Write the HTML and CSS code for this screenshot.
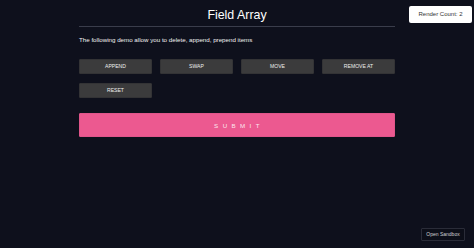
FILE: index.html
```html
<!DOCTYPE html>
<html lang="en">
<head>
<meta charset="utf-8">
<title>Field Array</title>
<link rel="stylesheet" href="styles.css">
</head>
<body>
  <div class="render-count">Render Count: 2</div>
  <main class="container">
    <h1 class="title">Field Array</h1>
    <p class="desc">The following demo allow you to delete, append, prepend items</p>
    <div class="actions">
      <button class="btn" type="button">APPEND</button>
      <button class="btn" type="button">SWAP</button>
      <button class="btn" type="button">MOVE</button>
      <button class="btn" type="button">REMOVE AT</button>
      <button class="btn" type="button">RESET</button>
    </div>
    <button class="submit" type="submit">SUBMIT</button>
  </main>
  <a class="sandbox" href="#">Open Sandbox</a>
</body>
</html>
```

FILE: styles.css
```css
* { box-sizing: border-box; }

html, body {
  margin: 0;
  padding: 0;
  height: 100%;
}

body {
  background: #0e101c;
  color: #fff;
  font-family: "Liberation Sans", Arial, sans-serif;
  position: relative;
  overflow: hidden;
}

.container {
  width: 316px;
  margin: 0 auto;
  display: flex;
  flex-direction: column;
}

.title {
  margin: 0;
  padding: 8px 0 3px;
  font-size: 12.4px;
  line-height: 15px;
  font-weight: 400;
  text-align: center;
  color: #fff;
  border-bottom: 1px solid #3a3d4b;
}

.desc {
  margin: 9px 0 0;
  font-size: 6.2px;
  line-height: 8px;
  color: #f2f2f2;
}

.actions {
  margin-top: 15px;
  display: grid;
  grid-template-columns: repeat(4, 73px);
  column-gap: 8px;
  row-gap: 9px;
}

.btn {
  height: 15px;
  margin: 0;
  padding: 0;
  background: #3b3b3c;
  border: 1px solid #333335;
  border-radius: 1px;
  color: #eeeeee;
  font-family: "Liberation Sans", Arial, sans-serif;
  font-size: 5.1px;
  line-height: 13px;
  text-align: center;
}

.submit {
  margin-top: 15px;
  height: 24px;
  padding: 0 0 0 4px;
  background: #ec5990;
  border: 1px solid #e0558a;
  border-radius: 1px;
  color: #fbe6ee;
  font-family: "Liberation Sans", Arial, sans-serif;
  font-size: 6.2px;
  letter-spacing: 4.4px;
  text-align: center;
}

.render-count {
  position: absolute;
  top: 6px;
  right: 2px;
  width: 63px;
  height: 17px;
  background: #fff;
  color: #333;
  border-radius: 2px;
  font-size: 6px;
  line-height: 17px;
  text-align: center;
}

.sandbox {
  position: absolute;
  right: 9px;
  bottom: 7px;
  width: 44px;
  height: 13px;
  border: 1px solid #2a2c38;
  border-radius: 1px;
  background: #0c0e18;
  color: #d0d0d4;
  font-size: 5px;
  line-height: 11px;
  text-align: center;
  text-decoration: none;
}
```
